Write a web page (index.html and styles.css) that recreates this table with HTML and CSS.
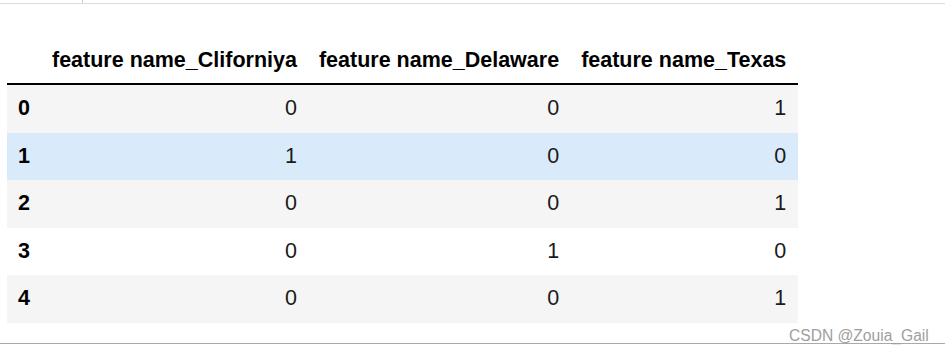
FILE: index.html
```html
<!DOCTYPE html>
<html>
<head>
<meta charset="utf-8">
<link rel="stylesheet" href="styles.css">
</head>
<body>
<div class="page">
  <div class="topbar"><span class="divider"></span></div>
  <div class="content">
    <table class="df">
      <thead>
        <tr>
          <th class="idx"></th>
          <th>feature name_Cliforniya</th>
          <th>feature name_Delaware</th>
          <th>feature name_Texas</th>
        </tr>
      </thead>
      <tbody>
        <tr class="odd"><th class="idx">0</th><td>0</td><td>0</td><td>1</td></tr>
        <tr class="hover"><th class="idx">1</th><td>1</td><td>0</td><td>0</td></tr>
        <tr class="odd"><th class="idx">2</th><td>0</td><td>0</td><td>1</td></tr>
        <tr><th class="idx">3</th><td>0</td><td>1</td><td>0</td></tr>
        <tr class="odd"><th class="idx">4</th><td>0</td><td>0</td><td>1</td></tr>
      </tbody>
    </table>
  </div>
  <div class="bottomline"></div>
  <div class="watermark">CSDN @Zouia_Gail</div>
</div>
</body>
</html>
```

FILE: styles.css
```css
html, body {
  margin: 0;
  padding: 0;
  background: #ffffff;
}

.page {
  position: relative;
  width: 945px;
  height: 352px;
  display: flex;
  flex-direction: column;
  font-family: "Liberation Sans", Arial, sans-serif;
  overflow: hidden;
}

.topbar {
  height: 3px;
  border-bottom: 1px solid #dcdcdc;
  display: flex;
  flex: none;
}

.divider {
  display: block;
  width: 1px;
  height: 3px;
  margin-left: 82px;
  background: #cfcfcf;
}

.content {
  flex: 1;
  padding-top: 34px;
  padding-left: 7px;
}

.df {
  border-collapse: separate;
  border-spacing: 0;
  font-size: 21.5px;
  color: #1a1a1a;
}

.df th,
.df td {
  height: 47.6px;
  padding: 0 11px;
  line-height: 1;
  vertical-align: middle;
  box-sizing: border-box;
  white-space: nowrap;
}

.df thead th {
  height: 47px;
  font-weight: bold;
  color: #000;
  text-align: right;
  border-bottom: 2px solid #000;
}

.df thead th:last-child,
.df tbody td:last-child {
  padding-right: 12px;
}

.df tbody th {
  font-weight: bold;
  color: #000;
  text-align: left;
}

.df tbody td {
  text-align: right;
  font-weight: normal;
}

.df tr.odd {
  background: #f5f5f5;
}

.df tr.hover {
  background: #d9ebfa;
}

.bottomline {
  flex: none;
  height: 1px;
  background: #a9a9a9;
  margin-bottom: 8px;
}

.watermark {
  position: absolute;
  left: 789px;
  top: 328px;
  font-family: "Liberation Sans", Arial, sans-serif;
  font-size: 15.6px;
  line-height: 16px;
  color: #9e9e9e;
  white-space: nowrap;
}
```
